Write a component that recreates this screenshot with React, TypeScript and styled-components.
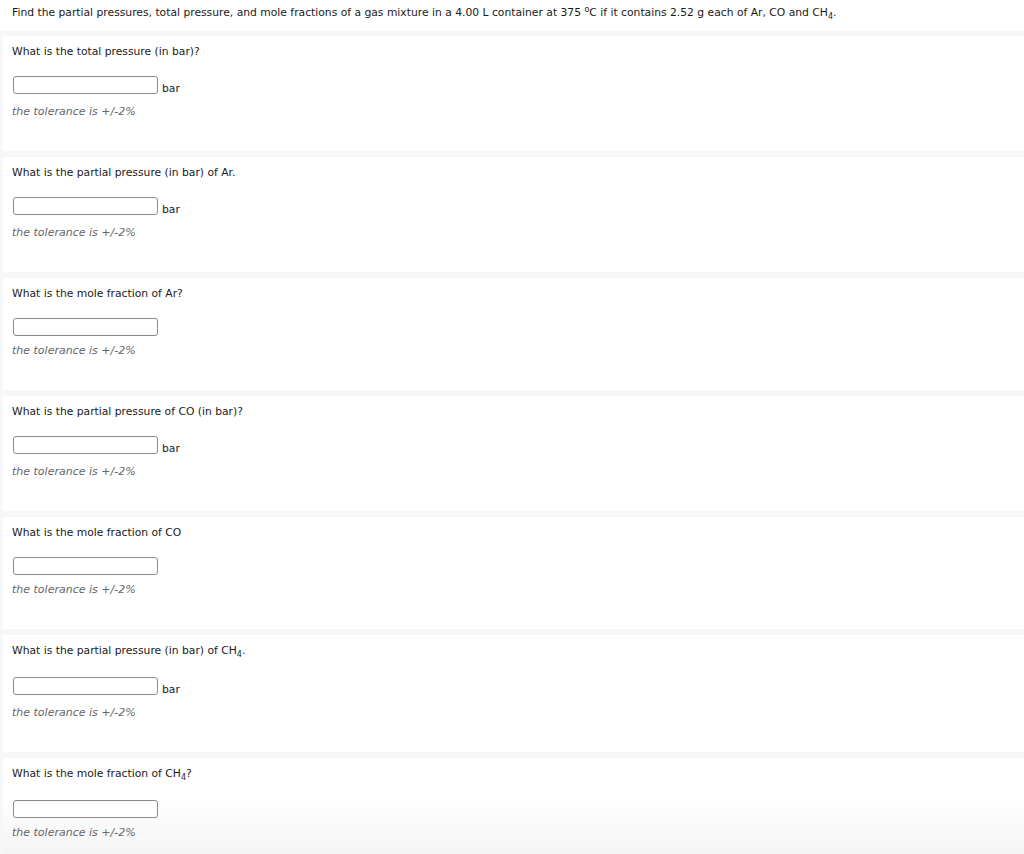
import React from "react";
import styled, { createGlobalStyle } from "styled-components";

const Global = createGlobalStyle`
  html, body { margin: 0; padding: 0; background: #ffffff; }
  body { font-family: "DejaVu Sans", Verdana, sans-serif; font-size: 10.75px; line-height: 12px; color: #1a1a1a; }
`;

const Page = styled.div`
  width: 1024px;
  min-height: 854px;
  background: #f6f7f9;
  display: flex;
  flex-direction: column;
`;

const Title = styled.div`
  background: #ffffff;
  height: 31px;
  box-sizing: border-box;
  padding: 6px 12px 0 12px;
  line-height: 13px;
  margin-bottom: 5px;
`;

const Section = styled.div<{ $fade?: boolean }>`
  margin-left: 3px;
  margin-bottom: 6px;
  background: ${(p) => (p.$fade ? "linear-gradient(#ffffff 0%, #ffffff 35%, #f1f1f1 100%)" : "#ffffff")};
  padding: 10px 9px 33px 9px;
  display: flex;
  flex-direction: column;
  flex: ${(p) => (p.$fade ? 1 : "none")};
`;

const Question = styled.div<{ $tall?: boolean }>`
  line-height: 12px;
  padding-bottom: ${(p) => (p.$tall ? 2 : 0)}px;
`;

const AnswerRow = styled.div<{ $unit?: boolean }>`
  display: flex;
  align-items: flex-end;
  gap: 4px;
  margin-top: 18px;
  margin-left: 1px;
  padding-bottom: ${(p) => (p.$unit ? 3 : 0)}px;
`;

const Input = styled.div`
  width: 143px;
  height: 16px;
  border: 1px solid #8a8a8a;
  border-radius: 3px;
  background: #ffffff;
`;

const Unit = styled.span`
  line-height: 12px;
  margin-bottom: -1px;
`;

const Tolerance = styled.div`
  margin-top: 9px;
  font-size: 11px;
  line-height: 12px;
  font-style: italic;
  color: #666666;
`;

const Sub = styled.sub`
  font-size: 8px;
  line-height: 0;
  vertical-align: -3px;
`;

const Sup = styled.sup`
  font-size: 8px;
  line-height: 0;
  vertical-align: 4px;
`;

const CH4 = () => (
  <>
    CH<Sub>4</Sub>
  </>
);

type Q = { text: React.ReactNode; unit?: string; tall?: boolean };

const questions: Q[] = [
  { text: "What is the total pressure (in bar)?", unit: "bar" },
  { text: "What is the partial pressure (in bar) of Ar.", unit: "bar" },
  { text: "What is the mole fraction of Ar?" },
  { text: "What is the partial pressure of CO (in bar)?", unit: "bar" },
  { text: "What is the mole fraction of CO" },
  { text: <>What is the partial pressure (in bar) of <CH4 />.</>, unit: "bar", tall: true },
  { text: <>What is the mole fraction of <CH4 />?</>, tall: true },
];

export default function App() {
  return (
    <>
      <Global />
      <Page>
        <Title>
          Find the partial pressures, total pressure, and mole fractions of a gas mixture in a 4.00 L container at 375 <Sup>o</Sup>C if it contains 2.52 g each of Ar, CO and <CH4 />.
        </Title>
        {questions.map((q, i) => (
          <Section key={i} $fade={i === questions.length - 1}>
            <Question $tall={q.tall}>{q.text}</Question>
            <AnswerRow $unit={!!q.unit}>
              <Input />
              {q.unit && <Unit>{q.unit}</Unit>}
            </AnswerRow>
            <Tolerance>the tolerance is +/-2%</Tolerance>
          </Section>
        ))}
      </Page>
    </>
  );
}
